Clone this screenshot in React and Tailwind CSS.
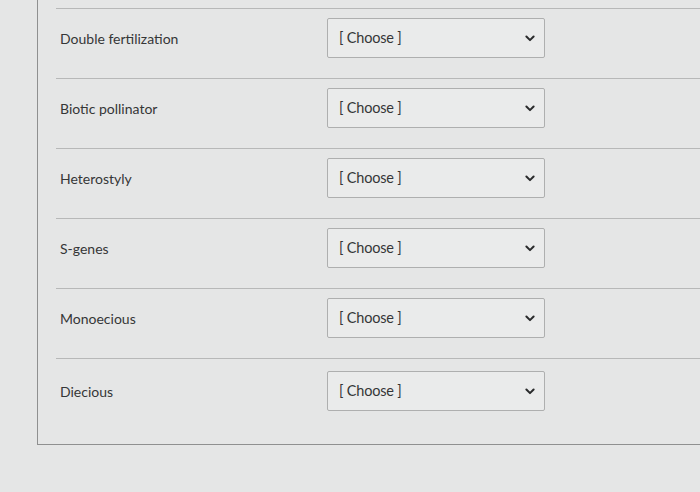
import React from "react";

const items = [
  "Double fertilization",
  "Biotic pollinator",
  "Heterostyly",
  "S-genes",
  "Monoecious",
  "Diecious",
];

function Chevron() {
  return (
    <svg width="10" height="7" viewBox="0 0 10 7" fill="none">
      <path d="M1.4 1.5 L5 5.1 L8.6 1.5" stroke="#2a2b2c" strokeWidth="2" strokeLinecap="round" strokeLinejoin="round" />
    </svg>
  );
}

export default function App() {
  return (
    <div className="w-[700px] h-[492px] bg-[#e5e6e6] overflow-hidden" style={{ fontFamily: "Lato, 'Open Sans', sans-serif" }}>
      <div className="ml-[37px] h-[445px] border-l border-b border-[#8f9090] pt-[8px]">
        <div className="ml-[18px]">
          {items.map((label, i) => (
            <div
              key={label}
              className={
                i === items.length - 1
                  ? "flex items-start border-t border-[#b7b8b8] pt-[12px] pb-[34px]"
                  : "flex items-start border-t border-[#b7b8b8] pt-[9px] pb-[20px]"
              }
            >
              <div className="w-[271px] h-[40px] flex items-center pl-[4px] text-[14px] text-[#353637]">
                {label}
              </div>
              <div className="w-[218px] h-[40px] flex items-center justify-between border border-[#aeafaf] rounded-[2px] bg-[#eaebeb] pl-[11px] pr-[9px]">
                <span className="text-[14.5px] text-[#353637] tracking-[-0.2px]">[ Choose ]</span>
                <Chevron />
              </div>
            </div>
          ))}
        </div>
      </div>
    </div>
  );
}
